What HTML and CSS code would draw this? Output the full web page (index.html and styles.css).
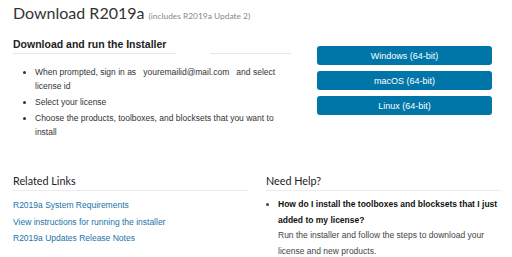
FILE: index.html
```html
<!DOCTYPE html>
<html lang="en">
<head>
    <meta charset="UTF-8">
    <meta name="viewport" content="width=device-width, initial-scale=1.0">
    <title>Download R2019a</title>
    <link rel="stylesheet" href="styles.css">
</head>
<body>
    <div class="page">
        <h1 class="title">Download R2019a <small>(includes R2019a Update 2)</small></h1>
        <div class="top">
            <div class="install">
                <h2 class="section-head">Download and run the Installer</h2>
                <ul class="steps">
                    <li>When prompted, sign in as &nbsp;&nbsp;youremailid@mail.com &nbsp;&nbsp;and select license id</li>
                    <li>Select your license</li>
                    <li>Choose the products, toolboxes, and blocksets that you want to install</li>
                </ul>
            </div>
            <div class="buttons">
                <button class="btn">Windows (64-bit)</button>
                <button class="btn">macOS (64-bit)</button>
                <button class="btn">Linux (64-bit)</button>
            </div>
        </div>
        <div class="bottom">
            <div class="links">
                <h3 class="sub-head">Related Links</h3>
                <a href="#">R2019a System Requirements</a>
                <a href="#">View instructions for running the installer</a>
                <a href="#">R2019a Updates Release Notes</a>
            </div>
            <div class="help">
                <h3 class="sub-head">Need Help?</h3>
                <ul class="faq">
                    <li>
                        <strong>How do I install the toolboxes and blocksets that I just added to my license?</strong>
                        Run the installer and follow the steps to download your license and new products.
                    </li>
                </ul>
            </div>
        </div>
    </div>
</body>
</html>
```
FILE: styles.css
```css
body {
    margin: 0;
    font-family: "Liberation Sans", Arial, sans-serif;
    color: #333;
    background: #fff;
}
.page {
    padding: 0 10px 0 13px;
}
.title {
    margin: 0;
    padding-top: 3px;
    font-family: Lato, sans-serif;
    font-weight: 400;
    font-size: 16px;
    line-height: 20px;
    color: #333;
}
.title small {
    font-size: 8.4px;
    color: #888;
}
.top {
    display: flex;
    margin-top: 11px;
}
.install {
    width: 278px;
}
.section-head {
    margin: 0;
    font-size: 10.5px;
    line-height: 14px;
    padding-bottom: 3px;
    color: #222;
    background: linear-gradient(to right, #e6e6e6 163px, transparent 163px, transparent 197px, #e6e6e6 197px) bottom / 100% 1px no-repeat;
}
.steps {
    margin: 11px 0 0;
    padding-left: 22px;
    font-size: 8.5px;
    line-height: 14px;
    width: 245px;
}
.steps li {
    margin-bottom: 2px;
}
.buttons {
    display: flex;
    flex-direction: column;
    gap: 6px;
    margin-left: 26px;
    margin-top: 9px;
    width: 175px;
}
.btn {
    height: 19px;
    padding: 0;
    border: none;
    border-radius: 3px;
    background-color: #0076a8;
    color: #fff;
    font-family: "Liberation Sans", Arial, sans-serif;
    font-size: 9px;
}
.bottom {
    display: flex;
    margin-top: 32px;
}
.links {
    width: 235px;
    display: flex;
    flex-direction: column;
}
.help {
    width: 235px;
    margin-left: 18px;
}
.sub-head {
    margin: 0 0 6px;
    font-family: Lato, sans-serif;
    font-weight: 400;
    font-size: 10.8px;
    line-height: 15px;
    padding-bottom: 2px;
    color: #222;
    border-bottom: 1px solid #ececec;
}
.links a {
    color: #1a74a8;
    text-decoration: none;
    font-size: 8.5px;
    line-height: 16.5px;
}
.faq {
    margin: 0;
    padding-left: 12px;
    font-size: 8.5px;
    line-height: 15.5px;
    color: #444;
}
.faq strong {
    display: block;
    color: #111;
}
```
